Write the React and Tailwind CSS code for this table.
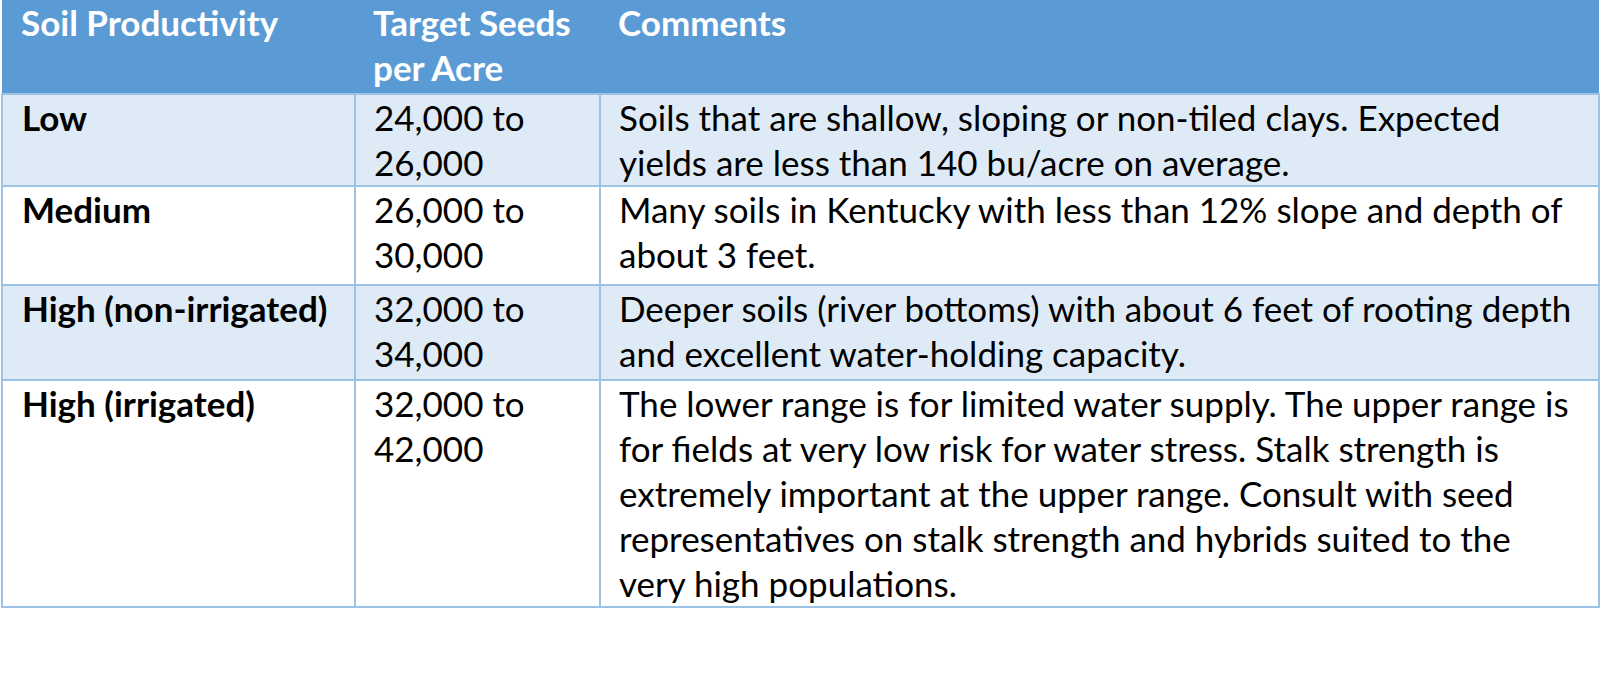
export default function App() {
  const rows = [
    {
      bg: "bg-[#deebf7]",
      h: "h-[89px]",
      a: "Low",
      b: ["24,000 to", "26,000"],
      c: ["Soils that are shallow, sloping or non-tiled clays. Expected", "yields are less than 140 bu/acre on average."],
    },
    {
      bg: "bg-white",
      h: "h-[99px]",
      a: "Medium",
      b: ["26,000 to", "30,000"],
      c: ["Many soils in Kentucky with less than 12% slope and depth of", "about 3 feet."],
    },
    {
      bg: "bg-[#deebf7]",
      h: "h-[95px]",
      a: "High (non-irrigated)",
      b: ["32,000 to", "34,000"],
      c: ["Deeper soils (river bottoms) with about 6 feet of rooting depth", "and excellent water-holding capacity."],
    },
    {
      bg: "bg-white",
      h: "h-[227px]",
      a: "High (irrigated)",
      b: ["32,000 to", "42,000"],
      c: [
        "The lower range is for limited water supply. The upper range is",
        "for fields at very low risk for water stress. Stalk strength is",
        "extremely important at the upper range. Consult with seed",
        "representatives on stalk strength and hybrids suited to the",
        "very high populations.",
      ],
    },
  ];
  const Lines = ({ lines }) => (
    <>
      {lines.map((l, i) => (
        <div key={i} className="whitespace-nowrap">
          {l}
        </div>
      ))}
    </>
  );
  return (
    <div className="w-[1600px] h-[683px] bg-white text-black font-['Lato',_'Open_Sans',_sans-serif] text-[35px] leading-[45px]">
      <table className="table-fixed border-collapse w-[1597px] ml-[1px]">
        <colgroup>
          <col className="w-[353px]" />
          <col className="w-[245px]" />
          <col className="w-[999px]" />
        </colgroup>
        <thead>
          <tr className="bg-[#5b9bd5] text-white h-[94px]">
            <th className="align-top text-left font-bold pl-[19px] pt-0">Soil Productivity</th>
            <th className="align-top text-left font-bold pl-[18px] pt-0">
              <Lines lines={["Target Seeds", "per Acre"]} />
            </th>
            <th className="align-top text-left font-bold pl-[18px] pt-0">Comments</th>
          </tr>
        </thead>
        <tbody>
          {rows.map((r, i) => (
            <tr key={i} className={`${r.bg} ${r.h}`}>
              <td className="align-top border-2 border-[#9cc2e5] pl-[19px] pt-0 font-bold whitespace-nowrap">{r.a}</td>
              <td className="align-top border-2 border-[#9cc2e5] pl-[18px] pt-0">
                <Lines lines={r.b} />
              </td>
              <td className="align-top border-2 border-[#9cc2e5] pl-[18px] pt-0">
                <Lines lines={r.c} />
              </td>
            </tr>
          ))}
        </tbody>
      </table>
    </div>
  );
}
